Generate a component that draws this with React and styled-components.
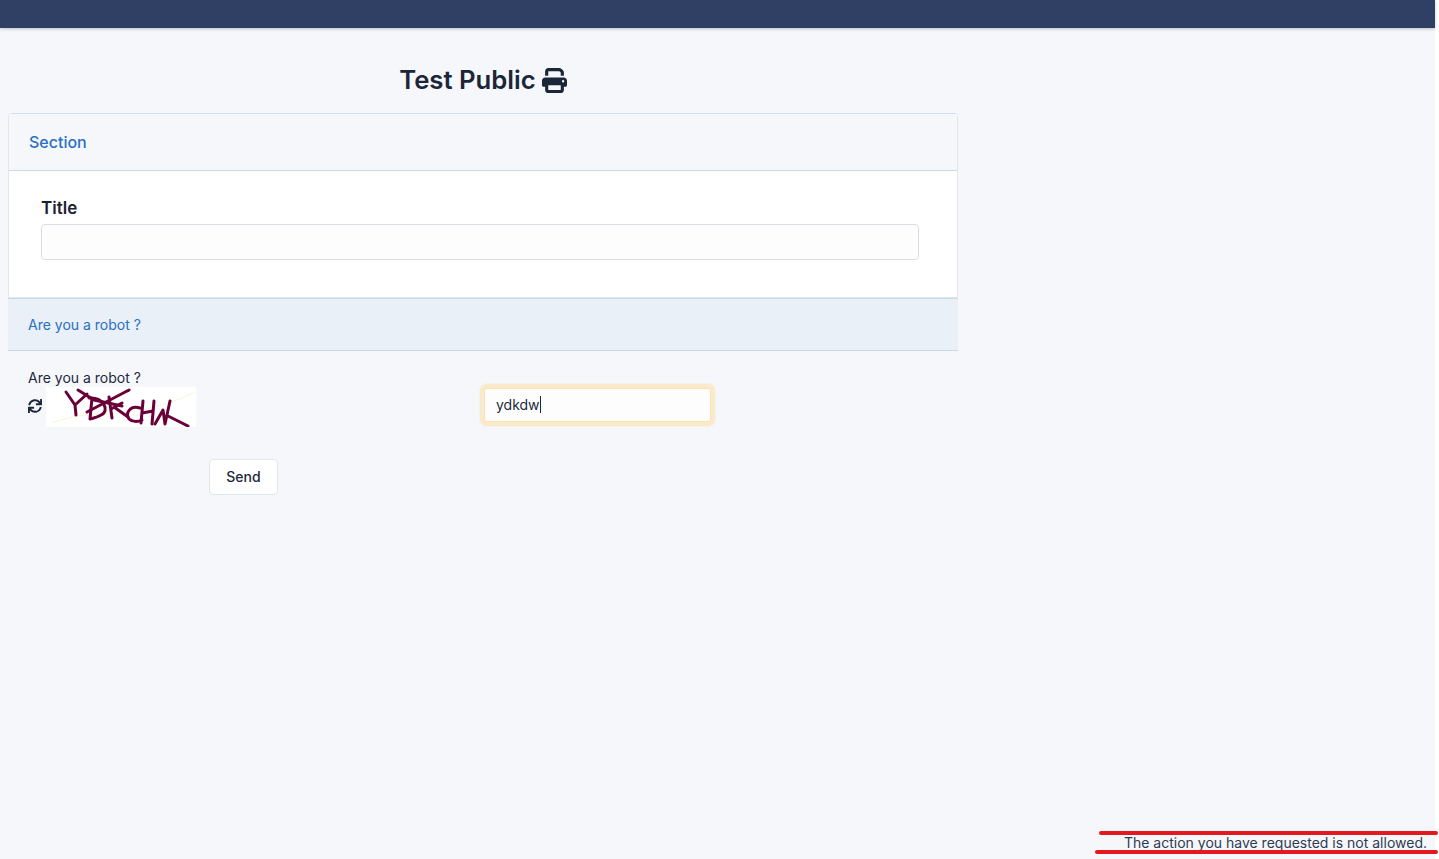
import React from "react";
import styled, { createGlobalStyle } from "styled-components";
import { FaSync } from "react-icons/fa";

const Global = createGlobalStyle`
  html, body { margin: 0; padding: 0; height: 100%; background: #ffffff; }
  body { font-family: Inter, "Liberation Sans", sans-serif; color: #1e293b; overflow: hidden; }
  * { box-sizing: border-box; }
`;

const Page = styled.div`
  position: relative;
  width: 1435px;
  height: 859px;
  background: #f5f7fb;
`;

const TopBar = styled.header`
  height: 28px;
  background: #2f4064;
  box-shadow: 0 1px 3px rgba(30, 41, 59, 0.25);
`;

const Main = styled.main`
  width: 950px;
  margin-left: 8px;
  padding-top: 36px;
`;

const Heading = styled.h1`
  display: flex;
  justify-content: center;
  align-items: center;
  gap: 6px;
  height: 32px;
  margin: 0 0 17px;
  font-size: 25.7px;
  font-weight: 600;
  line-height: 32px;
  color: #1c2639;
`;

const Card = styled.section`
  background: #ffffff;
  border: 1px solid #e2e6ee;
  border-top-color: #d5dde8;
  border-radius: 4px 4px 0 0;
`;

const CardHeader = styled.div`
  height: 57px;
  padding: 0 20px;
  display: flex;
  align-items: center;
  font-size: 16px;
  font-weight: 500;
  color: #2a6fc4;
  background: #f5f7fb;
  border-bottom: 1px solid #c8d9ea;
`;

const CardBody = styled.div`
  padding: 26px 38px 37px 32px;
`;

const FieldLabel = styled.label`
  display: block;
  height: 27px;
  font-size: 17px;
  font-weight: 600;
  line-height: 22px;
  color: #192233;
`;

const TextField = styled.div`
  height: 36px;
  background: #fdfdfe;
  border: 1px solid #d9dee6;
  border-radius: 4px;
`;

const Band = styled.div`
  height: 53px;
  padding: 0 20px;
  display: flex;
  align-items: center;
  font-size: 14px;
  color: #2a6fc4;
  background: #e9f0f8;
  border-top: 1px solid #c8d9ea;
  border-bottom: 1px solid #c8d9ea;
`;

const RobotSection = styled.div`
  padding: 18px 20px 0;
`;

const RobotLabel = styled.div`
  height: 17px;
  font-size: 14px;
  line-height: 17px;
  color: #1e293b;
`;

const RobotRow = styled.div`
  display: grid;
  grid-template-columns: 456px 227px;
  align-items: center;
  height: 40px;
  margin-top: 1px;
`;

const CaptchaGroup = styled.div`
  display: flex;
  align-items: center;
  gap: 4px;
  color: #1e293b;
`;

const RefreshIcon = styled(FaSync)`
  margin-bottom: 2px;
`;

const CaptchaImage = styled.svg`
  display: block;
  width: 150px;
  height: 40px;
  background: #ffffff;
`;

const FocusInput = styled.div`
  display: flex;
  align-items: center;
  align-self: start;
  height: 34px;
  margin-top: 1px;
  padding: 0 11px 1px;
  font-size: 14px;
  color: #1e293b;
  background: #fdfdfe;
  border: 1px solid #fbe3ae;
  border-radius: 3px;
  box-shadow: 0 0 0 4px #faeacb, 0 0 0 5px rgba(250, 234, 203, 0.4);
`;

const Caret = styled.span`
  display: inline-block;
  width: 1px;
  height: 17px;
  background: #1e293b;
`;

const Actions = styled.div`
  padding: 32px 0 0 181px;
`;

const SendButton = styled.button`
  width: 69px;
  height: 36px;
  padding: 0 0 1px;
  font-family: inherit;
  font-size: 14px;
  font-weight: 500;
  color: #1e293b;
  background: #ffffff;
  border: 1px solid #e2e6ee;
  border-radius: 4px;
`;

const Notice = styled.div`
  position: absolute;
  right: 8px;
  top: 834px;
  font-size: 14px;
  line-height: 18px;
  color: #2f3b52;
`;

const RedLine = styled.div`
  position: absolute;
  right: -3px;
  top: ${(p) => p.$top}px;
  width: ${(p) => p.$width}px;
  height: 4px;
  border-radius: 2px;
  background: #e4181f;
`;

const PrintIcon = () => (
  <svg width="25" height="25" viewBox="0 0 512 512" fill="#1c2639" aria-hidden="true">
    <path d="M128 0C92.7 0 64 28.7 64 64v96h64V64h226.7L384 93.3V160h64V93.3c0-17-6.7-33.3-18.7-45.3L400 18.7C388 6.7 371.7 0 354.7 0H128zM384 352v96H128v-96h256zm64 32h32c17.7 0 32-14.3 32-32v-96c0-35.3-28.7-64-64-64H64c-35.3 0-64 28.7-64 64v96c0 17.7 14.3 32 32 32h32v64c0 35.3 28.7 64 64 64h256c35.3 0 64-28.7 64-64v-64zm-16-136a24 24 0 1 1 0 48 24 24 0 1 1 0-48z" />
  </svg>
);

const Captcha = () => (
  <CaptchaImage viewBox="0 0 150 40" role="img" aria-label="captcha">
    <path d="M6 36 C25 29 40 27 60 27 S120 20 149 5" fill="none" stroke="#f8f6d8" strokeWidth="1" />
    <g fill="none" stroke="#6b0039" strokeWidth="3" strokeLinecap="round" strokeLinejoin="round">
      <path d="M20 5 L29 18 L30 28 M29 18 L41 7" />
      <path d="M32 3 L48 13 L76 19" />
      <path d="M46 11 L44 32 M43 11 C58 10 64 24 55 28 C52 30 48 31 44 32" />
      <path d="M41 25 L83 3" />
      <path d="M63 10 L66 31 M65 22 L76 16 M68 20 L82 30" />
      <path d="M94 21 C84 18 79 26 83 32 C86 35 92 35 96 33" />
      <path d="M97 14 L95 36 M108 14 L106 37 M96 26 L107 24" />
      <path d="M109 37 L117 23 L119 37 L124 14 M122 29 L142 39" />
    </g>
  </CaptchaImage>
);

export default function App() {
  return (
    <Page>
      <Global />
      <TopBar />
      <Main>
        <Heading>
          Test Public <PrintIcon />
        </Heading>
        <Card>
          <CardHeader>Section</CardHeader>
          <CardBody>
            <FieldLabel>Title</FieldLabel>
            <TextField />
          </CardBody>
        </Card>
        <Band>Are you a robot ?</Band>
        <RobotSection>
          <RobotLabel>Are you a robot ?</RobotLabel>
          <RobotRow>
            <CaptchaGroup>
              <RefreshIcon size={14} />
              <Captcha />
            </CaptchaGroup>
            <FocusInput>
              ydkdw
              <Caret />
            </FocusInput>
          </RobotRow>
          <Actions>
            <SendButton>Send</SendButton>
          </Actions>
        </RobotSection>
      </Main>
      <RedLine $top={831} $width={339} />
      <Notice>The action you have requested is not allowed.</Notice>
      <RedLine $top={850} $width={343} />
    </Page>
  );
}
